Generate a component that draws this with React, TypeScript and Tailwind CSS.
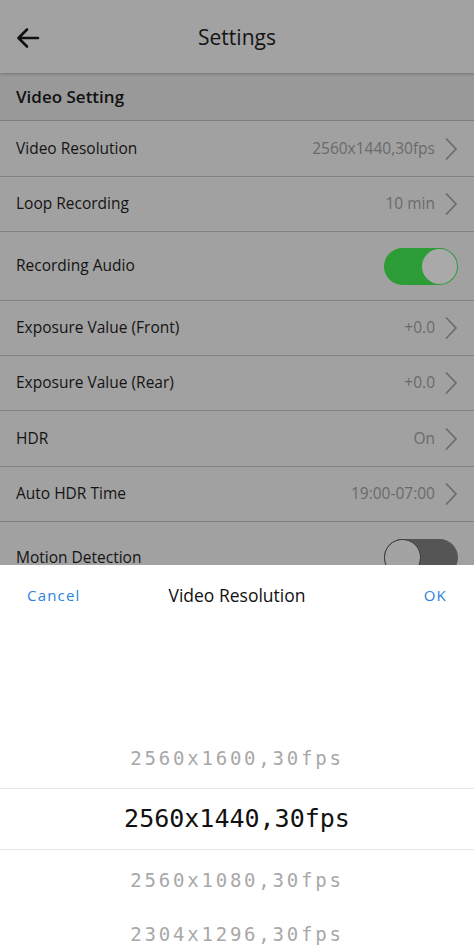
import { FC } from "react";

const rowFont = { fontFamily: '"Open Sans", "Noto Sans", sans-serif' };
const monoFont = { fontFamily: '"DejaVu Sans Mono", "Liberation Mono", monospace' };

const Chevron: FC = () => (
  <svg width="13" height="24" viewBox="0 0 13 24" className="ml-[10px] shrink-0">
    <polyline points="1.5,2 11,12 1.5,22" fill="none" stroke="#6c6c6c" strokeWidth="1.8" strokeLinecap="round" strokeLinejoin="round" />
  </svg>
);

type RowProps = { label: string; value?: string; h: string; toggle?: "on" | "off" };

const Row: FC<RowProps> = ({ label, value, h, toggle }) => (
  <div className={`flex items-center justify-between border-b border-[#828282] pl-4 pr-4 ${h}`}>
    <span className="text-[15.5px] text-[#141414]">{label}</span>
    {toggle === "on" && (
      <div className="flex h-[37px] w-[74px] items-center justify-end rounded-full bg-[#2b9c36] p-[1px]">
        <div className="h-[35px] w-[35px] rounded-full bg-[#a9a9a9]" />
      </div>
    )}
    {toggle === "off" && (
      <div className="flex h-[37px] w-[74px] items-center rounded-full bg-[#555555]">
        <div className="h-[37px] w-[37px] rounded-full border-[1.5px] border-[#3a3a3a] bg-[#a3a3a3]" />
      </div>
    )}
    {value !== undefined && (
      <div className="flex items-center">
        <span className="text-[15.5px] text-[#6a6a6a]">{value}</span>
        <Chevron />
      </div>
    )}
  </div>
);

const App: FC = () => {
  return (
    <div className="relative h-[951px] w-full overflow-hidden bg-[#a1a1a1]" style={rowFont}>
      {/* Header */}
      <div className="relative flex h-[73px] items-center justify-center bg-[#a2a2a2] shadow-[0_1px_3px_rgba(0,0,0,0.25)]">
        <svg width="26" height="22" viewBox="0 0 26 22" className="absolute left-[15px] top-[27px]">
          <path d="M23 11 H4 M12 2.5 L3.5 11 L12 19.5" fill="none" stroke="#111" strokeWidth="2.6" strokeLinecap="round" strokeLinejoin="round" />
        </svg>
        <span className="pt-[2px] text-[21px] text-[#141414]">Settings</span>
      </div>

      {/* Section */}
      <div className="flex h-[48px] items-center border-b border-[#7c7c7c] bg-[#999999] px-4">
        <span className="text-[17px] font-semibold text-[#111]">Video Setting</span>
      </div>

      <Row label="Video Resolution" value="2560x1440,30fps" h="h-[56px]" />
      <Row label="Loop Recording" value="10 min" h="h-[55px]" />
      <Row label="Recording Audio" toggle="on" h="h-[69px]" />
      <Row label="Exposure Value (Front)" value="+0.0" h="h-[55px]" />
      <Row label="Exposure Value (Rear)" value="+0.0" h="h-[55px]" />
      <Row label="HDR" value="On" h="h-[56px]" />
      <Row label="Auto HDR Time" value="19:00-07:00" h="h-[55px]" />
      <Row label="Motion Detection" toggle="off" h="h-[72px]" />

      {/* Bottom sheet picker */}
      <div className="absolute bottom-0 left-0 right-0 flex h-[386px] flex-col overflow-hidden bg-white">
        <div className="grid h-[60px] shrink-0 grid-cols-[1fr_auto_1fr] items-center px-[27px]">
          <span className="justify-self-start text-[15px] tracking-[1.2px] text-[#2a83dc]">Cancel</span>
          <span className="text-[17.5px] text-[#111]">Video Resolution</span>
          <span className="justify-self-end text-[15px] tracking-[1.2px] text-[#2a83dc]">OK</span>
        </div>
        <div className="h-[103px] shrink-0" />
        <div className="flex h-[60px] shrink-0 items-center justify-center text-[19px] tracking-[2.8px] text-[#a8a8a8]" style={monoFont}>
          2560x1600,30fps
        </div>
        <div className="flex h-[62px] shrink-0 items-center justify-center border-y border-[#e6e6e6] text-[25px] text-[#111]" style={monoFont}>
          2560x1440,30fps
        </div>
        <div className="flex h-[60px] shrink-0 items-center justify-center text-[19px] tracking-[2.8px] text-[#a8a8a8]" style={monoFont}>
          2560x1080,30fps
        </div>
        <div className="flex h-[48px] shrink-0 items-center justify-center text-[19px] tracking-[2.8px] text-[#a8a8a8]" style={monoFont}>
          2304x1296,30fps
        </div>
      </div>
    </div>
  );
};

export default App;
